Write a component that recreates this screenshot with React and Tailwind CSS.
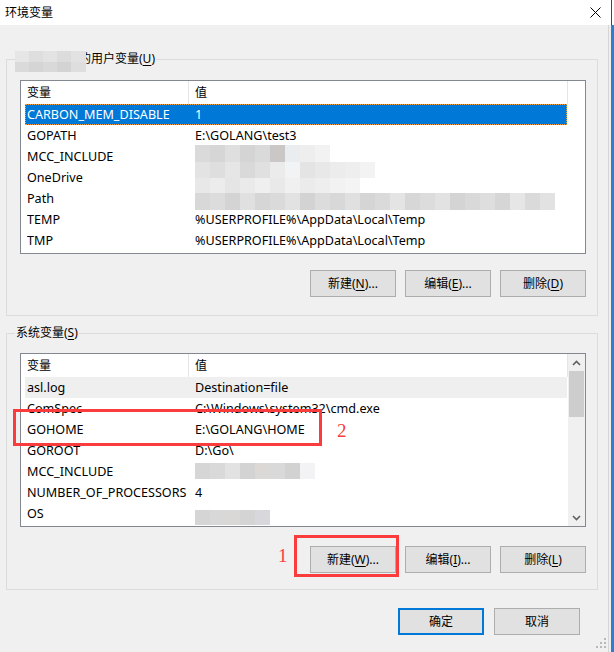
import React from "react";

const labelMosaic = [
  [15, 51, 14, 11, "#e6e6e6"], [29, 51, 14, 11, "#dedede"], [43, 51, 14, 11, "#e3e3e3"], [57, 51, 14, 11, "#dcdcdc"], [71, 51, 15, 11, "#e2e2e2"],
  [15, 62, 14, 10, "#dadada"], [29, 62, 14, 10, "#d5d5d5"], [43, 62, 14, 10, "#d9d9d9"], [57, 62, 14, 10, "#d3d3d3"], [71, 62, 15, 10, "#dedede"],
];

function rowCells(x0, y, h, colors, w = 15) {
  return colors.map((c, i) => [x0 + i * w, y, w, h, c]);
}

const userMosaic = [
  ...rowCells(195, 145, 17, ["#dadada", "#d6d6d6", "#dfdfdf", "#d4d4d4", "#dadada", "#cbc7c7", "#e9edef", "#eeeeee", "#f2f2f2"]),
  ...rowCells(195, 162, 16, ["#e3e3e3", "#dedede", "#e6e6e6", "#d9d9d9", "#e0e0e0", "#ebebeb", "#f1f3f5", "#e4e4e4", "#e8e8e8", "#ececec", "#eeeeee", "#f3f3f3"]),
  ...rowCells(195, 178, 15, ["#e8e8e8", "#ececec", "#e5e5e5", "#eaeaea", "#efefef", "#e9e9e9", "#f0f0f0", "#ebebeb", "#eeeeee", "#f2f2f2", "#f4f4f4"]),
  ...rowCells(195, 193, 17, ["#d8d8d8", "#dcdcdc", "#d4d4d4", "#e0e0e0", "#d6d6d6", "#dadada", "#e2e2e2", "#d3d3d3", "#dcdcdc", "#d8d8d8", "#e0e0e0", "#d5d5d5", "#dadada", "#e4e4e4", "#d7d7d7", "#dcdcdc", "#e2e2e2", "#d4d4d4", "#d9d9d9", "#dedede", "#d6d6d6", "#e6e6e6", "#dadada", "#e2e2e2"]),
];

const sysMosaic = [
  ...rowCells(195, 463, 16, ["#d6d6d6", "#d9d9d9", "#e2e2e2", "#d3d3d3", "#dbd8d5", "#d9d9d9", "#d2d2d2", "#f3f3f5"]),
  ...rowCells(195, 510, 15, ["#d5d5d5", "#d8d8d8", "#dad8d6", "#d4d4d4", "#d8d8dc"]),
];

function Mosaic({ cells }) {
  return (
    <>
      {cells.map(([x, y, w, h, c], i) => (
        <div
          key={i}
          className="absolute"
          style={{ left: x, top: y, width: w, height: h, background: c }}
        />
      ))}
    </>
  );
}

function U({ children }) {
  return <span className="underline underline-offset-[2px]">{children}</span>;
}

function Btn({ children, primary }) {
  return (
    <div
      className={
        "w-[86px] h-[27px] flex items-center justify-center bg-[#e1e1e1] text-[12px] text-black " +
        (primary ? "border-2 border-[#0078d7]" : "border border-[#adadad]")
      }
    >
      {children}
    </div>
  );
}

function Header() {
  return (
    <div className="flex h-[23px] shrink-0 text-[12px]">
      <div className="w-[167px] pl-[6px] flex items-center">变量</div>
      <div className="w-px bg-[#e5e5e5]" />
      <div className="w-[378px] pl-[6px] flex items-center">值</div>
      <div className="w-px bg-[#e5e5e5]" />
    </div>
  );
}

function Row({ name, value, selected, gray }) {
  return (
    <div
      className={
        "ml-[4px] w-[542px] h-[21px] shrink-0 flex items-center pl-[2px] pt-[2px] text-[12.6px] " +
        (selected
          ? "bg-[#0078d7] text-white outline-1 outline-dotted outline-[#f0a040] -outline-offset-1"
          : gray
          ? "bg-[#efefef] text-black"
          : "text-black")
      }
    >
      <div className="w-[168px] whitespace-nowrap overflow-hidden">{name}</div>
      <div className="whitespace-nowrap">{value}</div>
    </div>
  );
}

function Chevron({ down }) {
  return (
    <svg width="9" height="6" viewBox="0 0 9 6">
      <path
        d={down ? "M1 1 L4.5 4.5 L8 1" : "M1 5 L4.5 1.5 L8 5"}
        fill="none"
        stroke="#606060"
        strokeWidth="1.6"
      />
    </svg>
  );
}

function Scrollbar() {
  return (
    <div className="w-[17px] bg-[#f0f0f0] flex flex-col">
      <div className="h-[17px] flex items-center justify-center">
        <Chevron />
      </div>
      <div className="mx-[1px] h-[46px] bg-[#cdcdcd]" />
      <div className="flex-1" />
      <div className="h-[17px] flex items-center justify-center">
        <Chevron down />
      </div>
    </div>
  );
}

function ListBox({ rows, scrollbar }) {
  return (
    <div className="h-[174px] border border-[#828790] bg-white flex overflow-hidden">
      <div className="w-[547px] flex flex-col">
        <Header />
        {rows.map((r, i) => (
          <Row key={i} {...r} />
        ))}
      </div>
      {scrollbar ? <Scrollbar /> : <div className="w-[17px]" />}
    </div>
  );
}

function Group({ label, rows, scrollbar, buttons, pt, btnGap, pb }) {
  return (
    <div className={"relative border border-[#dcdcdc] pl-[13px] pr-[11px] " + pt + " " + pb}>
      <div className="absolute left-[8px] -top-[9px] h-[16px] px-[1px] bg-[#f0f0f0] flex items-center text-[12px] text-black leading-none">
        {label}
      </div>
      <ListBox rows={rows} scrollbar={scrollbar} />
      <div className={"flex justify-end gap-[9px] " + btnGap}>
        {buttons.map((b, i) => (
          <Btn key={i}>{b}</Btn>
        ))}
      </div>
    </div>
  );
}

const userRows = [
  { name: "CARBON_MEM_DISABLE", value: "1", selected: true },
  { name: "GOPATH", value: "E:\\GOLANG\\test3" },
  { name: "MCC_INCLUDE", value: "" },
  { name: "OneDrive", value: "" },
  { name: "Path", value: "" },
  { name: "TEMP", value: "%USERPROFILE%\\AppData\\Local\\Temp" },
  { name: "TMP", value: "%USERPROFILE%\\AppData\\Local\\Temp" },
];

const sysRows = [
  { name: "asl.log", value: "Destination=file", gray: true },
  { name: "ComSpec", value: "C:\\Windows\\system32\\cmd.exe" },
  { name: "GOHOME", value: "E:\\GOLANG\\HOME" },
  { name: "GOROOT", value: "D:\\Go\\" },
  { name: "MCC_INCLUDE", value: "" },
  { name: "NUMBER_OF_PROCESSORS", value: "4" },
  { name: "OS", value: "" },
];

export default function App() {
  return (
    <div className="relative w-[614px] h-[652px] flex overflow-hidden bg-[#f0f0f0] text-black [font-family:'Noto_Sans','Noto_Sans_CJK_SC',sans-serif]">
      <div className="relative w-[608px] h-full flex flex-col bg-[#f0f0f0]">
        <div className="h-[25px] shrink-0 bg-white flex items-center justify-between pl-[5px] pr-[7px]">
          <span className="text-[12px] leading-none">环境变量</span>
          <svg width="11" height="11" viewBox="0 0 11 11">
            <path d="M0.5 0.5 L10.5 10.5 M10.5 0.5 L0.5 10.5" stroke="#000" strokeWidth="1" />
          </svg>
        </div>
        <div className="pl-[6px] pr-[10px] mt-[34px] flex flex-col">
          <Group
            label={
              <span>
                <span className="pl-[63px]">的用户变量(<U>U</U>)</span>
              </span>
            }
            rows={userRows}
            buttons={[
              <span>新建(<U>N</U>)...</span>,
              <span>编辑(<U>E</U>)...</span>,
              <span>删除(<U>D</U>)</span>,
            ]}
            pt="pt-[20px]"
            btnGap="mt-[16px]"
            pb="pb-[18px]"
          />
          <div className="mt-[17px]">
            <Group
              label={<span>系统变量(<U>S</U>)</span>}
              rows={sysRows}
              scrollbar
              buttons={[
                <span>新建(<U>W</U>)...</span>,
                <span>编辑(<U>I</U>)...</span>,
                <span>删除(<U>L</U>)</span>,
              ]}
              pt="pt-[19px]"
              btnGap="mt-[19px]"
              pb="pb-[16px]"
            />
          </div>
          <div className="mt-[18px] mr-[18px] flex justify-end gap-[10px]">
            <Btn primary>确定</Btn>
            <Btn>取消</Btn>
          </div>
        </div>
        <svg className="absolute right-[1px] bottom-[3px]" width="12" height="12" viewBox="0 0 12 12">
          <rect x="9" y="1" width="2" height="2" fill="#b8b8b8" />
          <rect x="5" y="5" width="2" height="2" fill="#b8b8b8" />
          <rect x="9" y="5" width="2" height="2" fill="#b8b8b8" />
          <rect x="1" y="9" width="2" height="2" fill="#b8b8b8" />
          <rect x="5" y="9" width="2" height="2" fill="#b8b8b8" />
          <rect x="9" y="9" width="2" height="2" fill="#b8b8b8" />
        </svg>
      </div>
      <div className="w-[6px] h-full flex flex-col">
        <div className="h-[25px] flex bg-white">
          <div className="w-[3px]" />
          <div className="w-px bg-[#444]" />
        </div>
        <div className="flex-1 flex bg-[#eeeeee]">
          <div className="w-px bg-[#d6d6d6]" />
          <div className="w-[2px]" />
          <div className="w-[3px] bg-[#2a7fd4]" />
        </div>
      </div>

      <Mosaic cells={labelMosaic} />
      <Mosaic cells={userMosaic} />
      <Mosaic cells={sysMosaic} />

      <div className="absolute left-[13px] top-[409px] w-[309px] h-[37px] border-[3px] border-[#fa3c3c]" />
      <div className="absolute left-[294px] top-[535px] w-[105px] h-[42px] border-[3px] border-[#fa3c3c]" />
      <span className="absolute left-[337px] top-[420px] text-[19px] leading-[22px] text-[#fa3c3c] [font-family:'Liberation_Serif',serif]">2</span>
      <span className="absolute left-[278px] top-[545px] text-[19px] leading-[22px] text-[#fa3c3c] [font-family:'Liberation_Serif',serif]">1</span>
    </div>
  );
}
